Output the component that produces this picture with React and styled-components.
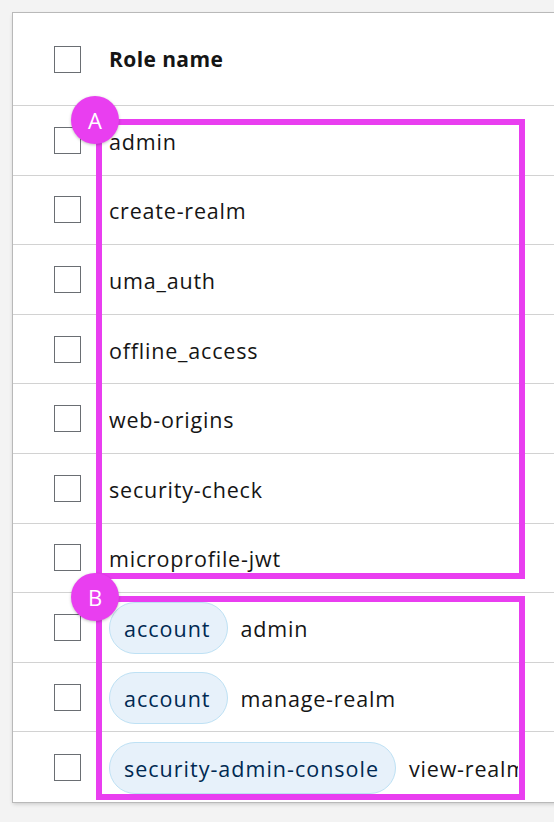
import React from 'react'
import styled, { createGlobalStyle } from 'styled-components'

const GlobalStyle = createGlobalStyle`
  html, body {
    margin: 0;
    padding: 0;
    background: #f3f3f3;
    overflow: hidden;
  }
  body {
    font-family: "Open Sans", "Noto Sans", "Liberation Sans", sans-serif;
  }
`

const Page = styled.div`
  width: 554px;
  height: 822px;
  padding: 13px 0 0 13px;
  box-sizing: border-box;
  overflow: hidden;
`

const Card = styled.div`
  position: relative;
  margin-right: -60px;
  background: #fff;
  box-shadow: 0 0 0 1px #b9b9b9, 0 2px 4px rgba(0, 0, 0, 0.18);
`

const Row = styled.div`
  display: flex;
  align-items: center;
  gap: 28px;
  box-sizing: border-box;
  height: ${(p) => (p.$head ? '93px' : '69.6px')};
  padding-left: 41px;
  border-bottom: ${(p) => (p.$last ? 'none' : '1px solid #d2d2d2')};
  overflow: hidden;
`

const Check = styled.span`
  flex: none;
  width: 27px;
  height: 27px;
  box-sizing: border-box;
  border: 1.5px solid #6a6e73;
  background: #fff;
`

const HeadText = styled.span`
  font-size: 21px;
  font-weight: 700;
  letter-spacing: 0.4px;
  color: #151515;
`

/* name column is cut off at the right edge, as in the reference */
const Cell = styled.span`
  display: flex;
  align-items: center;
  gap: 13px;
  width: 409px;
  overflow: hidden;
  font-size: 21.5px;
  letter-spacing: 0.8px;
  color: #151515;
  white-space: nowrap;
  padding-top: 2px;
`

const Chip = styled.span`
  flex: none;
  display: inline-flex;
  align-items: center;
  height: 52px;
  box-sizing: border-box;
  padding: 0 16px 0 14px;
  border-radius: 26px;
  background: #e7f1fa;
  border: 1.5px solid #bee1f4;
  color: #002952;
  letter-spacing: 1px;
`

const Frame = styled.div`
  position: absolute;
  left: 83px;
  width: 429px;
  top: ${(p) => p.$top}px;
  height: ${(p) => p.$h}px;
  box-sizing: border-box;
  border: 6px solid #e93ef0;
  pointer-events: none;
`

const Badge = styled.span`
  position: absolute;
  left: -31px;
  top: -29px;
  width: 48px;
  height: 48px;
  border-radius: 50%;
  background: #e93ef0;
  color: #fff;
  display: flex;
  align-items: center;
  justify-content: center;
  font-size: 22px;
  box-shadow: 0 1px 3px rgba(0, 0, 0, 0.25);
`

const realmRoles = [
  'admin',
  'create-realm',
  'uma_auth',
  'offline_access',
  'web-origins',
  'security-check',
  'microprofile-jwt',
]

const clientRoles = [
  { client: 'account', role: 'admin' },
  { client: 'account', role: 'manage-realm' },
  { client: 'security-admin-console', role: 'view-realm' },
]

export default function App() {
  return (
    <Page>
      <GlobalStyle />
      <Card>
        <Row $head>
          <Check />
          <HeadText>Role name</HeadText>
        </Row>
        {realmRoles.map((r) => (
          <Row key={r}>
            <Check />
            <Cell>{r}</Cell>
          </Row>
        ))}
        {clientRoles.map((r, i) => (
          <Row key={r.client + r.role} $last={i === clientRoles.length - 1}>
            <Check />
            <Cell>
              <Chip>{r.client}</Chip>
              {r.role}
            </Cell>
          </Row>
        ))}
        <Frame $top={106} $h={460}>
          <Badge>A</Badge>
        </Frame>
        <Frame $top={583} $h={204}>
          <Badge>B</Badge>
        </Frame>
      </Card>
    </Page>
  )
}
